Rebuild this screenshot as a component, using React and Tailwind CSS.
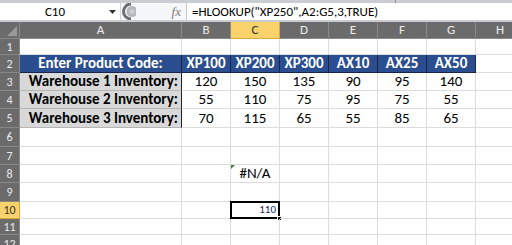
import React from "react";

const font = { fontFamily: "Carlito, Calibri, Lato, 'Liberation Sans', sans-serif" };

const colWidths = ["w-[162px]", "w-[49px]", "w-[49px]", "w-[49px]", "w-[49px]", "w-[49px]", "w-[49px]", "w-[49px]"];
const colNames = ["A", "B", "C", "D", "E", "F", "G", "H"];

const rowHeights = [
  "h-[16px]",
  "h-[18px]",
  "h-[18px]",
  "h-[18px]",
  "h-[19px]",
  "h-[19px]",
  "h-[18px]",
  "h-[18px]",
  "h-[19px]",
  "h-[17px]",
  "h-[16px]",
  "h-[18px]",
];

const tableRows = {
  2: { label: "Enter Product Code:", vals: ["XP100", "XP200", "XP300", "AX10", "AX25", "AX50"] },
  3: { label: "Warehouse 1 Inventory:", vals: [120, 150, 135, 90, 95, 140] },
  4: { label: "Warehouse 2 Inventory:", vals: [55, 110, 75, 95, 75, 55] },
  5: { label: "Warehouse 3 Inventory:", vals: [70, 115, 65, 55, 85, 65] },
};

const FormulaBar = () => (
  <div className="h-[22px] flex flex-col bg-[#c9ccd1]">
    <div className="h-[3px] flex">
      <div className="w-[395px]" />
      <div className="w-px bg-[#8d8f93]" />
    </div>
    <div className="h-[17px] flex bg-white">
      <div className="w-[121px] flex items-center relative border-r border-[#d0d3d8]">
        <span className="flex-1 text-center text-[13px] text-black pr-[10px]">C10</span>
        <svg width="7" height="4" viewBox="0 0 7 4" className="absolute right-[4px] top-[7px]">
          <path d="M0 0 H7 L3.5 4 Z" fill="#333" />
        </svg>
      </div>
      <div className="w-[66px] flex items-center bg-[#f6f7f9] border-r border-[#c4c7cc]">
        <svg width="14" height="17" viewBox="0 0 14 17" className="ml-[1px]">
          <path d="M9 1 A7.5 7.5 0 0 0 9 16" stroke="#6d6f73" strokeWidth="3" fill="none" />
          <circle cx="10" cy="8.5" r="5.5" fill="#b4b7bb" />
          <circle cx="10" cy="8.5" r="2.5" fill="#c9cbce" />
        </svg>
        <span className="ml-auto mr-[5px] italic text-[13px] text-[#7a7a7a] font-['Liberation_Serif']">fx</span>
      </div>
      <div className="flex-1 flex items-center pl-[5px] text-[13px] text-black whitespace-nowrap">
        =HLOOKUP("XP250",A2:G5,3,TRUE)
      </div>
    </div>
    <div className="h-[2px]" />
  </div>
);

const HeaderRow = () => (
  <div className="h-[17px] flex">
    <div className="w-[20px] shrink-0 bg-[#6b6b6b] border-r border-b border-[#888] relative">
      <svg width="10" height="10" viewBox="0 0 10 10" className="absolute right-[2px] bottom-[2px]">
        <path d="M10 0 V10 H0 Z" fill="#9a9a9a" />
      </svg>
    </div>
    {colNames.map((c, i) => (
      <div
        key={c}
        className={`${colWidths[i]} shrink-0 flex items-center justify-center text-[13px] border-r border-b ${
          c === "C"
            ? "bg-[#f9d26b] text-[#333] border-[#d9a93e]"
            : "bg-[#6b6b6b] text-[#ececec] border-[#8a8a8a]"
        }`}
      >
        {c}
      </div>
    ))}
  </div>
);

const Cell = ({ row, col }) => {
  const base = `${colWidths[col]} shrink-0 h-full border-r border-b flex items-center relative`;
  const data = tableRows[row];

  if (data && col <= 6) {
    if (row === 2) {
      return (
        <div className={`${base} bg-[#2b4e90] border-[#17274a] justify-center text-white font-bold text-[15px]`}>
          {col === 0 ? data.label : data.vals[col - 1]}
        </div>
      );
    }
    if (col === 0) {
      return (
        <div
          className={`${base} bg-[#d9d9d9] border-b-[#b5b5b5] border-r-[#1f1f1f] ${
            row === 5 ? "border-b-[#1f1f1f]" : ""
          } justify-end pr-[3px] text-black font-bold text-[15px]`}
        >
          {data.label}
        </div>
      );
    }
    return (
      <div className={`${base} border-[#dcdcdc] justify-center text-black text-[15px]`}>{data.vals[col - 1]}</div>
    );
  }

  if (row === 8 && col === 2) {
    return (
      <div className={`${base} border-[#dcdcdc] justify-center text-black text-[15px]`}>
        <div className="absolute left-0 top-0 w-0 h-0 border-t-[4px] border-r-[4px] border-t-[#3d7f44] border-r-transparent" />
        #N/A
      </div>
    );
  }

  if (row === 10 && col === 2) {
    return (
      <div className={`${base} border-[#dcdcdc] justify-end pr-[3px] text-[#26265a] text-[11px]`}>
        110
        <div className="absolute -left-[1px] -top-[1px] -right-[1px] -bottom-[1px] border-2 border-black" />
        <div className="absolute -right-[3px] -bottom-[3px] w-[5px] h-[5px] bg-black border border-white" />
      </div>
    );
  }

  return <div className={`${base} border-[#dcdcdc]`} />;
};

const App = () => {
  return (
    <div className="w-[512px] h-[245px] overflow-hidden bg-white" style={font}>
      <FormulaBar />
      <HeaderRow />
      {rowHeights.map((h, idx) => {
        const row = idx + 1;
        return (
          <div key={row} className={`${h} flex`}>
            <div
              className={`w-[20px] shrink-0 h-full flex items-center justify-center text-[12px] border-r border-b ${
                row === 10
                  ? "bg-[#f9d26b] text-[#333] border-[#d9a93e]"
                  : "bg-[#6b6b6b] text-[#ececec] border-[#888]"
              }`}
            >
              {row}
            </div>
            {colNames.map((c, col) => (
              <Cell key={c} row={row} col={col} />
            ))}
          </div>
        );
      })}
    </div>
  );
};

export default App;
